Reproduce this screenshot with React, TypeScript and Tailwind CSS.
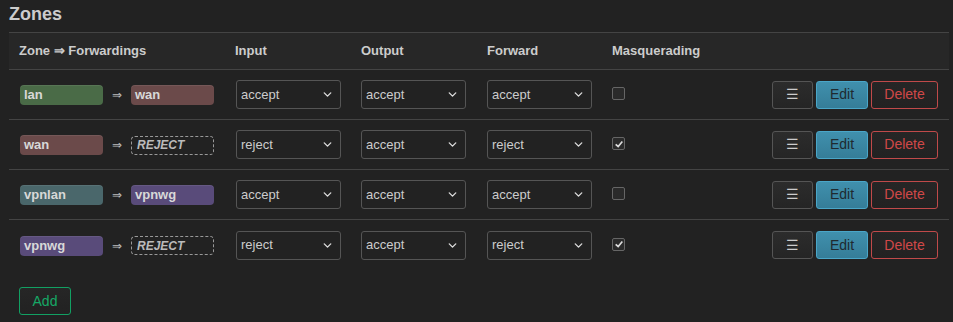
import { ChevronDown } from 'lucide-react'

type Zone = {
  name: string
  color: string
  target: string | null
  targetColor?: string
  input: string
  output: string
  forward: string
  masq: boolean
}

const zones: Zone[] = [
  { name: 'lan', color: 'bg-[#4a6b47]', target: 'wan', targetColor: 'bg-[#6b4a4a]', input: 'accept', output: 'accept', forward: 'accept', masq: false },
  { name: 'wan', color: 'bg-[#6b4a4a]', target: null, input: 'reject', output: 'accept', forward: 'reject', masq: true },
  { name: 'vpnlan', color: 'bg-[#4a676b]', target: 'vpnwg', targetColor: 'bg-[#594b7a]', input: 'accept', output: 'accept', forward: 'accept', masq: false },
  { name: 'vpnwg', color: 'bg-[#594b7a]', target: null, input: 'reject', output: 'accept', forward: 'reject', masq: true },
]

const cols = 'grid grid-cols-[216px_126px_126px_125px_1fr] items-center'

function Badge({ label, color }: { label: string; color: string }) {
  return (
    <div className={`flex h-[20px] w-[83px] items-center rounded-[4px] px-[4px] text-[13px] font-bold text-[#d8d8d8] shadow-[inset_0_1px_0_rgba(255,255,255,0.08)] ${color}`}>
      {label}
    </div>
  )
}

function Select({ value }: { value: string }) {
  return (
    <div className="flex h-[29px] w-[105px] items-center justify-between rounded-[3px] border border-[#555] bg-[#222] pl-[4px] pr-[6px] text-[13px] text-[#ccc]">
      <span>{value}</span>
      <ChevronDown className="h-[13px] w-[13px] text-[#ddd]" strokeWidth={2.5} />
    </div>
  )
}

export default function App() {
  return (
    <div className="h-[322px] w-[953px] bg-[#222] px-[9px] font-['Liberation_Sans',Arial,sans-serif]">
      <h2 className="pt-[3px] text-[18px] font-bold leading-[22px] text-[#ccc]">Zones</h2>

      <div className="mt-[7px] w-[940px]">
        {/* Header */}
        <div className={`${cols} h-[38px] border-y border-[#444] bg-[#272727] text-[13px] font-bold text-[#ccc]`}>
          <div className="pl-[10px]">Zone ⇒ Forwardings</div>
          <div className="pl-[10px]">Input</div>
          <div className="pl-[10px]">Output</div>
          <div className="pl-[10px]">Forward</div>
          <div className="pl-[10px]">Masquerading</div>
        </div>

        {/* Rows */}
        {zones.map((z, i) => (
          <div
            key={z.name}
            className={`${cols} h-[50px] ${i < zones.length - 1 ? 'border-b border-[#444]' : ''}`}
          >
            <div className="flex items-center pl-[11px] pt-[1px]">
              <Badge label={z.name} color={z.color} />
              <span className="w-[28px] text-center text-[12px] text-[#bbb]">⇒</span>
              {z.target ? (
                <Badge label={z.target} color={z.targetColor ?? ''} />
              ) : (
                <div className="flex h-[19px] w-[83px] items-center rounded-[4px] border border-dashed border-[#999] px-[5px] text-[12px] font-bold italic text-[#bbb]">
                  REJECT
                </div>
              )}
            </div>
            <div className="pl-[11px]"><Select value={z.input} /></div>
            <div className="pl-[10px]"><Select value={z.output} /></div>
            <div className="pl-[10px]"><Select value={z.forward} /></div>
            <div className="flex items-center justify-between pl-[10px] pr-[11px]">
              <div className="mb-[2px] flex h-[13px] w-[13px] items-center justify-center rounded-[2px] border border-[#666] bg-[#2a2a2a]">
                {z.masq && (
                  <svg viewBox="0 0 12 12" className="h-[10px] w-[10px]">
                    <path d="M2 6.5 L5 9 L10 3" fill="none" stroke="#ddd" strokeWidth="2" />
                  </svg>
                )}
              </div>
              <div className="flex items-center gap-[3px] text-[14px]">
                <button className="flex h-[28px] w-[41px] items-center justify-center rounded-[3px] border border-[#555] bg-gradient-to-b from-[#2c2c2c] to-[#252525] text-[#ccc]">
                  ☰
                </button>
                <button className="h-[28px] w-[52px] rounded-[3px] border border-[#4aa6c8] bg-gradient-to-b from-[#4090ad] to-[#357d98] text-[#1f2a30]">
                  Edit
                </button>
                <button className="h-[28px] w-[67px] rounded-[3px] border border-[#c04a4a] bg-gradient-to-b from-[#262626] to-[#222] text-[#d04848]">
                  Delete
                </button>
              </div>
            </div>
          </div>
        ))}
      </div>

      <button className="ml-[10px] mt-[17px] h-[28px] w-[52px] rounded-[3px] border border-[#12a063] bg-gradient-to-b from-[#262626] to-[#222] text-[14px] text-[#16a866]">
        Add
      </button>
    </div>
  )
}
